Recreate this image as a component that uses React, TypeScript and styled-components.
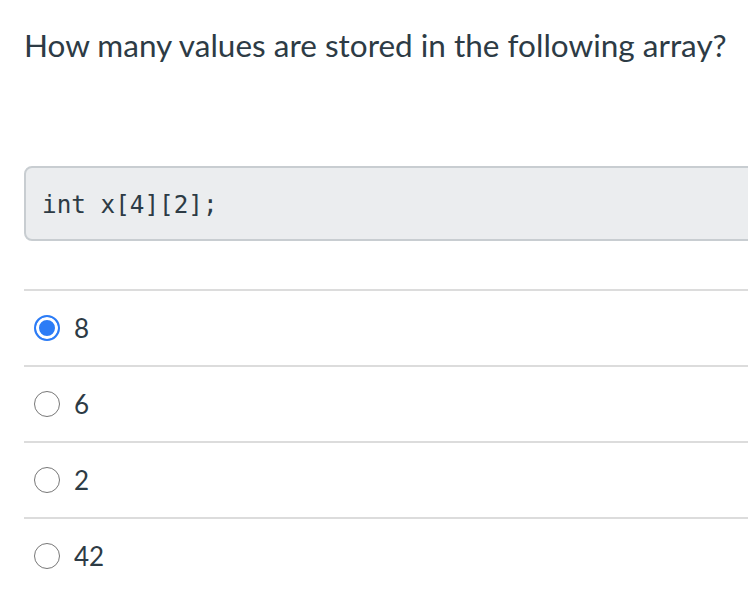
import React from 'react';
import styled, { createGlobalStyle } from 'styled-components';

const GlobalStyle = createGlobalStyle`
  html, body {
    margin: 0;
    padding: 0;
    background: #ffffff;
    overflow: hidden;
  }
  body {
    font-family: Lato, 'Open Sans', sans-serif;
    color: #2d3b45;
  }
`;

interface Answer {
  id: string;
  label: string;
  checked?: boolean;
}

const answers: Answer[] = [
  { id: 'a1', label: '8', checked: true },
  { id: 'a2', label: '6' },
  { id: 'a3', label: '2' },
  { id: 'a4', label: '42' },
];

export default function App() {
  return (
    <>
      <GlobalStyle />
      <Page>
        <Question>How many values are stored in the following array?</Question>
        <CodeBlock>
          <code>int x[4][2];</code>
        </CodeBlock>
        <AnswerList>
          {answers.map((a) => (
            <AnswerRow key={a.id}>
              <Radio $checked={!!a.checked} />
              <AnswerText>{a.label}</AnswerText>
            </AnswerRow>
          ))}
        </AnswerList>
      </Page>
    </>
  );
}

// page wrapper, content runs off the right edge like the screenshot
const Page = styled.div`
  padding: 27px 0 0 24px;
  width: 740px;
`;

const Question = styled.h1`
  margin: 0;
  font-family: Lato, sans-serif;
  font-weight: 400;
  font-size: 31.5px;
  line-height: 36px;
  color: #2d3b45;
  white-space: nowrap;
`;

const CodeBlock = styled.pre`
  margin: 103px 0 0;
  padding: 22px 16px 19px;
  background: #ebedef;
  border: 2px solid #c8cdd1;
  border-radius: 8px;

  code {
    font-family: 'DejaVu Sans Mono', 'Liberation Mono', monospace;
    font-size: 24.3px;
    line-height: 30px;
    color: #2d3b45;
  }
`;

const AnswerList = styled.div`
  margin-top: 48px;
  display: flex;
  flex-direction: column;
`;

const AnswerRow = styled.label`
  display: flex;
  align-items: center;
  gap: 14px;
  height: 74px;
  padding-left: 10px;
  border-top: 2px solid #dcdcdc;
  cursor: pointer;
`;

const Radio = styled.span<{ $checked: boolean }>`
  flex: 0 0 auto;
  box-sizing: border-box;
  width: 26px;
  height: 26px;
  border-radius: 50%;
  border: ${(p) => (p.$checked ? '2px solid #2c7cf6' : '1.5px solid #777777')};
  background: ${(p) => (p.$checked ? '#2c7cf6' : '#ffffff')};
  box-shadow: ${(p) => (p.$checked ? 'inset 0 0 0 3px #ffffff' : 'none')};
`;

const AnswerText = styled.span`
  font-family: Lato, sans-serif;
  font-size: 26px;
  line-height: 32px;
  color: #2d3b45;
`;
